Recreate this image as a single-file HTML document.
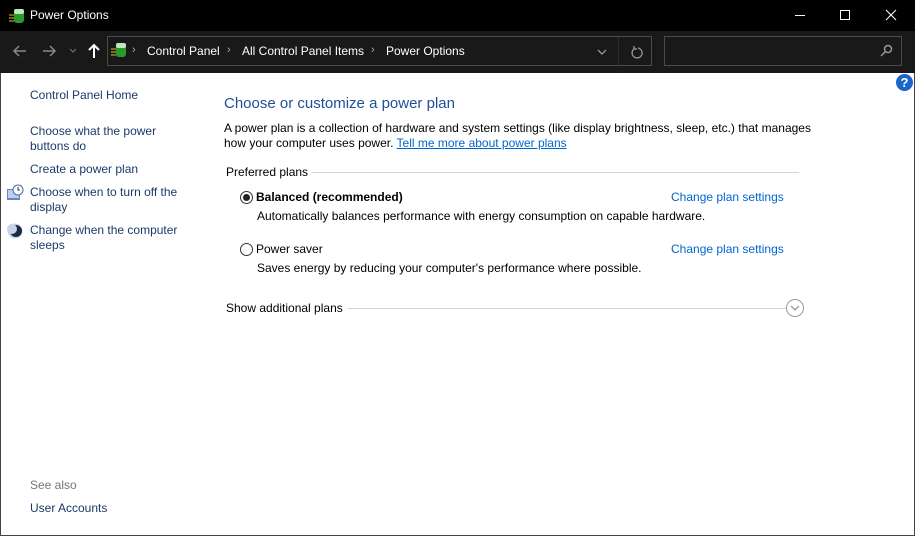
<!DOCTYPE html>
<html><head><style>
*{margin:0;padding:0;box-sizing:border-box}
body{width:915px;height:536px;overflow:hidden;background:#fff;font-family:"Liberation Sans",sans-serif;font-size:12px;color:#000;position:relative}
.a{position:absolute;white-space:nowrap}
.lk{color:#0066cc}
.nv{color:#1b3a6b}
</style></head><body>
<div class="a" style="left:0;top:0;width:915px;height:31px;background:#000"></div>
<div class="a" style="left:0;top:31px;width:915px;height:42px;background:#191919"></div>
<div class="a" style="left:0;top:73px;width:1px;height:463px;background:#444"></div>
<div class="a" style="left:914px;top:73px;width:1px;height:463px;background:#444"></div>
<div class="a" style="left:0;top:535px;width:915px;height:1px;background:#444"></div>
<svg class="a" style="left:8px;top:7px" width="18" height="18"><rect x="6" y="2" width="10" height="14" rx="3" fill="#2a9a2a"/><rect x="6" y="2" width="10" height="5" rx="2" fill="#bfe6bf"/><path d="M1 8h5M1 11h5M1 14h5" stroke="#e8c030" stroke-width="1"/></svg>
<div class="a" style="left:30px;top:8px;color:#fff;font-size:12px">Power Options</div>
<svg class="a" style="left:790px;top:8px" width="110" height="16" stroke="#fff" fill="none" stroke-width="1"><path d="M5 7.5h10"/><rect x="50.5" y="2.5" width="9" height="9"/><path d="M96 2l10 10M106 2l-10 10"/></svg>
<svg class="a" style="left:10px;top:42px" width="95" height="18" fill="none" stroke-width="1.5"><path d="M4 9h12M9 4l-5 5 5 5" stroke="#888"/><path d="M33 9h12M40 4l5 5-5 5" stroke="#888"/><path d="M60 7l3 3 3-3" stroke="#777" stroke-width="1"/><path d="M84 16V3M79 8l5-5 5 5" stroke="#fff" stroke-width="2"/></svg>
<div class="a" style="left:107px;top:36px;width:545px;height:30px;border:1px solid #4a4a4a"></div>
<div class="a" style="left:618px;top:37px;width:1px;height:28px;background:#2b2b2b"></div>
<svg class="a" style="left:110px;top:41px" width="18" height="18"><rect x="6" y="2" width="10" height="14" rx="3" fill="#2a9a2a"/><rect x="6" y="2" width="10" height="5" rx="2" fill="#bfe6bf"/><path d="M1 8h5M1 11h5M1 14h5" stroke="#e8c030"/></svg>
<div class="a" style="left:132px;top:44px;color:#aaa;font-size:11px">›</div>
<div class="a" style="left:147px;top:44px;color:#fff">Control Panel</div>
<div class="a" style="left:227px;top:44px;color:#aaa;font-size:11px">›</div>
<div class="a" style="left:242px;top:44px;color:#fff">All Control Panel Items</div>
<div class="a" style="left:371px;top:44px;color:#aaa;font-size:11px">›</div>
<div class="a" style="left:386px;top:44px;color:#fff">Power Options</div>
<svg class="a" style="left:596px;top:44px" width="50" height="16" fill="none" stroke="#999" stroke-width="1.3"><path d="M2 6l4 4 4-4"/><path d="M42 4a5 5 0 1 1-4 1M38 2v3h3"/></svg>
<div class="a" style="left:664px;top:36px;width:238px;height:30px;border:1px solid #4a4a4a"></div>
<svg class="a" style="left:880px;top:44px" width="14" height="14" fill="none" stroke="#999" stroke-width="1.5"><circle cx="8" cy="5" r="3.5"/><path d="M5.5 7.5L1 12"/></svg>
<div class="a" style="left:896px;top:74px;width:17px;height:17px;border-radius:50%;background:#1a66c8;color:#fff;font-weight:bold;font-size:13px;text-align:center;line-height:17px">?</div>
<div class="a nv" style="left:30px;top:88px">Control Panel Home</div>
<div class="a nv" style="left:30px;top:124px;line-height:15px">Choose what the power<br>buttons do</div>
<div class="a nv" style="left:30px;top:162px">Create a power plan</div>
<svg class="a" style="left:6px;top:184px" width="18" height="18"><rect x="1" y="5" width="13" height="11" fill="#6a84c0"/><rect x="2" y="6" width="11" height="8" fill="#bcd0ee"/><circle cx="12" cy="6" r="5" fill="#fff" stroke="#4a64a8"/><path d="M12 3v3h2" stroke="#333" fill="none"/></svg>
<div class="a nv" style="left:30px;top:185px;line-height:15px">Choose when to turn off the<br>display</div>
<svg class="a" style="left:6px;top:222px" width="18" height="18"><circle cx="9" cy="9" r="7.5" fill="#c8d4e8"/><circle cx="10" cy="9" r="6" fill="#1c2844"/><circle cx="6" cy="7" r="5" fill="#c8d4e8"/></svg>
<div class="a nv" style="left:30px;top:223px;line-height:15px">Change when the computer<br>sleeps</div>
<div class="a" style="left:30px;top:478px;color:#777">See also</div>
<div class="a nv" style="left:30px;top:501px">User Accounts</div>
<div class="a" style="left:224px;top:95px;font-size:15px;color:#1e4f9a">Choose or customize a power plan</div>
<div class="a" style="left:224px;top:121px;line-height:15px">A power plan is a collection of hardware and system settings (like display brightness, sleep, etc.) that manages<br>how your computer uses power. <span style="color:#0066cc;text-decoration:underline">Tell me more about power plans</span></div>
<div class="a" style="left:226px;top:165px">Preferred plans</div>
<div class="a" style="left:312px;top:172px;width:487px;height:1px;background:#d4d4d4"></div>
<div class="a" style="left:240px;top:191px;width:13px;height:13px;border:1px solid #333;border-radius:50%"><div style="margin:2px;width:7px;height:7px;border-radius:50%;background:#222"></div></div>
<div class="a" style="left:256px;top:190px;font-weight:bold">Balanced (recommended)</div>
<div class="a lk" style="left:671px;top:190px">Change plan settings</div>
<div class="a" style="left:257px;top:209px">Automatically balances performance with energy consumption on capable hardware.</div>
<div class="a" style="left:240px;top:243px;width:13px;height:13px;border:1px solid #333;border-radius:50%"></div>
<div class="a" style="left:256px;top:242px">Power saver</div>
<div class="a lk" style="left:671px;top:242px">Change plan settings</div>
<div class="a" style="left:257px;top:261px">Saves energy by reducing your computer's performance where possible.</div>
<div class="a" style="left:226px;top:301px">Show additional plans</div>
<div class="a" style="left:348px;top:308px;width:438px;height:1px;background:#d4d4d4"></div>
<svg class="a" style="left:785px;top:298px" width="20" height="20" fill="none" stroke="#999"><circle cx="10" cy="10" r="8.5"/><path d="M6 8l4 4 4-4" stroke-width="1.3"/></svg>
</body></html>
